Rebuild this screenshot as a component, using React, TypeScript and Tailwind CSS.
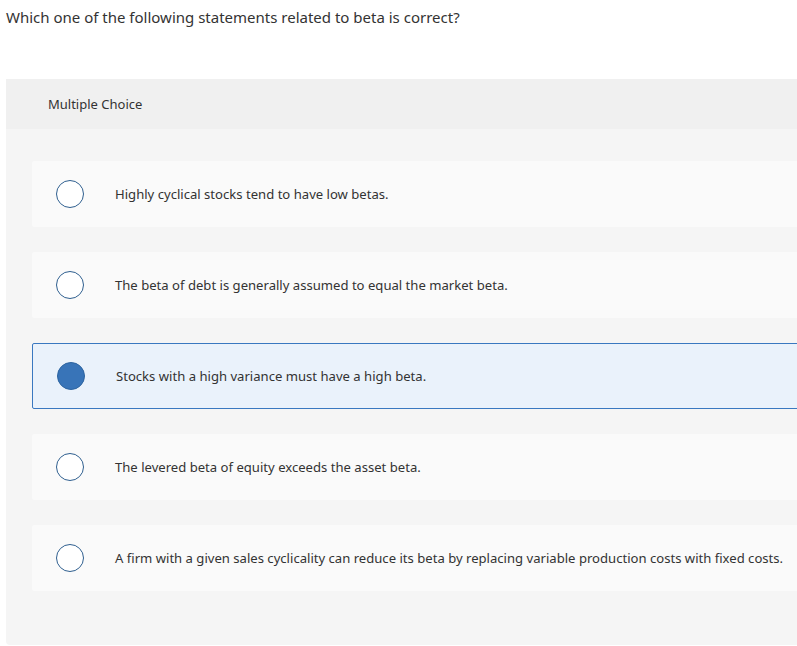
import React from "react";

const options = [
  "Highly cyclical stocks tend to have low betas.",
  "The beta of debt is generally assumed to equal the market beta.",
  "Stocks with a high variance must have a high beta.",
  "The levered beta of equity exceeds the asset beta.",
  "A firm with a given sales cyclicality can reduce its beta by replacing variable production costs with fixed costs.",
];

const selected = 2;

export default function App() {
  return (
    <div
      className="min-h-screen overflow-x-hidden bg-white text-[#333]"
      style={{ fontFamily: "'Noto Sans', sans-serif" }}
    >
      {/* Question */}
      <p className="pl-[6px] pt-[7px] text-[15px] leading-[20px]">
        Which one of the following statements related to beta is correct?
      </p>

      {/* Answer panel */}
      <div className="ml-[6px] mr-[-20px] mt-[52px] rounded-b-[4px] bg-[#f5f5f5] pb-[54px]">
        <div className="flex h-[50px] items-center bg-[#f0f0f0] pl-[42px] pt-[2px] text-[13px]">
          Multiple Choice
        </div>

        <div className="flex flex-col gap-[25px] pl-[26px] pt-[32px]">
          {options.map((text, i) => {
            const isSelected = i === selected;
            return (
              <div
                key={i}
                className={`flex h-[66px] items-center gap-[31px] rounded-[2px] pl-[24px] ${
                  isSelected
                    ? "border border-[#3a78c0] bg-[#eaf2fb] pl-[23px]"
                    : "bg-[#fafafa]"
                }`}
              >
                {isSelected ? (
                  <span className="block h-[28px] w-[28px] shrink-0 rounded-full border-[1.5px] border-[#2d64a0] bg-[#3874b8]" />
                ) : (
                  <span className="block h-[28px] w-[28px] shrink-0 rounded-full border-[1.5px] border-[#2f5f8f] bg-white" />
                )}
                <span className="pt-[1px] text-[13.1px]">{text}</span>
              </div>
            );
          })}
        </div>
      </div>
    </div>
  );
}
